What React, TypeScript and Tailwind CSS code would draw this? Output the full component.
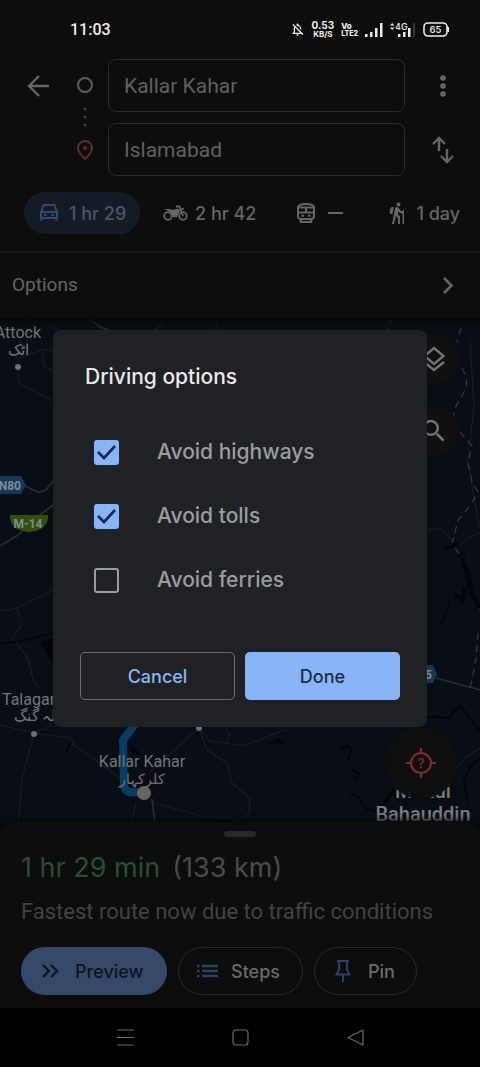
import React, { useState } from 'react';
import { MdChevronRight, MdHiking, MdOutlineNotificationsOff, MdSearch } from 'react-icons/md';

const OPTIONS = [
  { id: 'highways', label: 'Avoid highways', checked: true },
  { id: 'tolls', label: 'Avoid tolls', checked: true },
  { id: 'ferries', label: 'Avoid ferries', checked: false },
];

export default function App() {
  return (
    <div className="relative flex min-h-screen flex-col bg-[#0d0d0d] font-[Inter,sans-serif]">
      <StatusBar />
      <RouteHeader />
      <RouteMap />
      <RouteSheet />
      <SystemNav />
      <DrivingOptions />
    </div>
  );
}

const StatusBar = () => (
  <div className="flex h-[59px] items-center justify-between pl-[70px] pr-[30px] text-[#ededed]">
    <span className="font-[Roboto,sans-serif] text-[16px] font-medium">11:03</span>
    <div className="flex items-center gap-[7px]">
      <MdOutlineNotificationsOff size={15} />
      <div className="flex flex-col items-center text-[10px] font-bold leading-[9px]">
        <span>0.53</span>
        <span className="text-[8px]">KB/S</span>
      </div>
      <div className="flex flex-col text-[8px] font-extrabold leading-[8px]">
        <span>Vo</span>
        <span className="text-[7px] leading-[7px]">LTE2</span>
      </div>
      <svg width="18" height="15" viewBox="0 0 18 15" fill="currentColor">
        <path d="M0 12h2.500v3H0zM5 10h2.500v5H5zM10 6h2.500v9H10zM15 1h2.500v14H15z" />
      </svg>
      <svg width="26" height="15" viewBox="0 0 26 15" fill="currentColor">
        <path d="M0 3.500L2.200 1l2.200 2.500zM0 5.500L2.200 8l2.200-2.500zM8 12h2.500v3H8zM13 10h2.500v5H13zM18 6h2.500v9H18z" />
        <path d="M23 1h2v14h-2z" fill="#333" />
        <text x="5" y="8" fontSize="9" fontWeight="500">4G</text>
      </svg>
      <svg width="27" height="15" viewBox="0 0 27 15">
        <rect x="1" y="1" width="23" height="13" rx="4" fill="none" stroke="currentColor" strokeWidth="1.600" />
        <path d="M25 5v5" stroke="currentColor" strokeWidth="2" />
        <text x="12.500" y="11" fontSize="9.500" fontWeight="500" textAnchor="middle" fill="currentColor">65</text>
      </svg>
    </div>
  </div>
);

const RouteHeader = () => (
  <header>
    <div className="flex pl-[24px] pr-[21px] text-[#666]">
      <button aria-label="Back" className="flex h-[53px] w-[27px] items-center justify-center">
        <svg width="22" height="22" viewBox="0 0 22 22" fill="none" stroke="currentColor" strokeWidth="2.400">
          <path d="M22 11H3M12 1L2 11l10 10" />
        </svg>
      </button>
      <div className="ml-[22px] mr-[11px] flex w-6 flex-col items-center justify-between pb-4 pt-[18px]">
        <span className="size-4 rounded-full border-2 border-[#5c5c5c]" />
        <svg width="4" height="20" viewBox="0 0 4 20" fill="#4a4a4a">
          <circle cx="2" cy="2" r="1.300" />
          <circle cx="2" cy="10" r="1.300" />
          <circle cx="2" cy="18" r="1.300" />
        </svg>
        <svg width="16" height="20" viewBox="0 0 16 20" fill="none" stroke="#5e2d2b" strokeWidth="2">
          <path d="M8 1a7 7 0 0 0-7 7c0 4.500 7 11 7 11s7-6.500 7-11a7 7 0 0 0-7-7z" />
          <circle cx="8" cy="8" r="2" fill="#5e2d2b" stroke="none" />
        </svg>
      </div>
      <div className="flex min-w-0 flex-1 flex-col gap-[11px]">
        <PlaceInput label="Starting point" value="Kallar Kahar" />
        <PlaceInput label="Destination" value="Islamabad" />
      </div>
      <div className="ml-[22px] flex w-8 flex-col gap-[11px]">
        <button aria-label="More" className="flex h-[53px] items-center justify-center">
          <svg width="6" height="22" viewBox="0 0 6 22" fill="currentColor">
            <circle cx="3" cy="3" r="2.800" />
            <circle cx="3" cy="11" r="2.800" />
            <circle cx="3" cy="19" r="2.800" />
          </svg>
        </button>
        <button aria-label="Swap places" className="flex h-[53px] items-center justify-center">
          <svg width="22" height="28" viewBox="0 0 22 28" fill="none" stroke="currentColor" strokeWidth="2.400">
            <path d="M7 15V3M1 8l6-6 6 6M15 13v12M9 20l6 6 6-6" />
          </svg>
        </button>
      </div>
    </div>

    {/* Travel modes */}
    <div className="mt-4 flex h-[42px] items-center overflow-hidden whitespace-nowrap pl-6 text-[18px] font-medium text-[#666]">
      <button className="flex h-full w-[116px] items-center gap-[10px] rounded-full bg-[#151b24] pl-[15px] text-[#4c5569]">
        <Car /> 1 hr 29
      </button>
      <button className="ml-[23px] flex items-center gap-[7px]">
        <Motorcycle /> 2 hr 42
      </button>
      <button aria-label="Transit" className="ml-[41px] flex items-center gap-[13px]">
        <Subway /> <span className="h-0.5 w-[15px] bg-current" />
      </button>
      <button className="ml-[42px] flex items-center gap-[7px]">
        <MdHiking size={24} className="shrink-0" /> 1 day
      </button>
    </div>

    <button className="mt-[17px] flex h-[67px] w-full items-center justify-between border-t-2 border-[#191919] pl-3 pr-[18px] font-[Roboto,sans-serif] text-[19px] text-[#666]">
      Options
      <svg width="28" height="28" viewBox="0 0 28 28" fill="none" stroke="currentColor" strokeWidth="2.600">
        <path d="M10 6l7.500 7.500L10 21" />
      </svg>
    </button>
  </header>
);

const PlaceInput = ({ label, value }: { label: string; value: string }) => (
  <input
    aria-label={label}
    defaultValue={value}
    className="h-[53px] w-full rounded-lg border border-[#2c2c2c] bg-transparent px-[15px] font-[Roboto,sans-serif] text-[21px] text-[#606060] outline-none"
  />
);

const Car = () => (
  <svg width="20" height="18" viewBox="0 0 20 18" fill="none" stroke="#344869" strokeWidth="2" className="shrink-0">
    <path d="M2 8l2.500-7h11L18 8v6H2zM2 8h16M2.500 13v4M17.500 13v4" />
    <path d="M5 11h2.500M12.500 11H15" />
  </svg>
);

const Motorcycle = () => (
  <svg width="25" height="16" viewBox="0 0 25 16" fill="none" stroke="currentColor" strokeWidth="1.800" className="shrink-0">
    <circle cx="5" cy="11" r="3.800" />
    <circle cx="20" cy="11" r="3.800" />
    <path d="M13 1.500h3.500L20 11M17 5l4-1.500" />
    <path d="M1 4h6l3 1 5-1.500 2 2-3 6.500H10L7.500 7z" fill="currentColor" stroke="none" />
  </svg>
);

const Subway = () => (
  <svg width="18" height="20" viewBox="0 0 18 20" fill="none" stroke="currentColor" strokeWidth="2" className="shrink-0">
    <path d="M1 4.500Q1 1 9 1t8 3.500V13q0 3-3 3H4q-3 0-3-3zM1 9.500h16M9 4v5.500" />
    <path d="M2 4.500h14M3 19h12M4.500 16.500L3 19M13.500 16.500L15 19" />
    <path d="M4.500 12.800H7M11 12.800h2.500" />
  </svg>
);

const RouteMap = () => (
  <main className="relative min-h-[520px] flex-1 overflow-hidden bg-[#090e16]">
    <svg className="absolute inset-0 size-full font-[Roboto,sans-serif]" viewBox="0 0 480 520" preserveAspectRatio="xMidYMin slice">
      <defs>
        <linearGradient id="shade" x1="0" y1="0" x2="0" y2="1">
          <stop offset="0" stopColor="#060708" />
          <stop offset="1" stopColor="#060708" stopOpacity="0" />
        </linearGradient>
      </defs>

      {/* Roads */}
      <g fill="none" stroke="#171d27" strokeWidth="1.200">
        <path d="M20 0l22 4 16 8M165 0q-2 9-12 12M219 0l-3 12M18 49v15l34 19M18 49v-8l24-9h11M42 32l2 17 9 3" />
        <path d="M0 292q10 1 17-2l33-16 3-4M17 290l4 18-9 12 16 20 5 22 6 8" />
        <path d="M0 407l34 8 36 5 4 7 46 33 14 6M34 416l-12 44-5 60M53 407l-19 8" />
        <path d="M199 410l8 22 20 13 5 20 18 15-1 16-8 5-40-3-50-14M199 410l11 13 34 5 42-17M226 413l4 2-4 11M199 410l-50 45M136 484l-8 36" />
        <path d="M427 213q12-6 20 4l8 9q6 3 12-6l13-5M470 20l4 70-6 50 6 40 6 30M480 430l-15 10-18 22" />
      </g>
      <g fill="none" stroke="#242d39" strokeWidth="1.800">
        <path d="M88 0l12 9 9 3M25 168l13 6q8 0 11-6l4-5M0 228l18-11 22-20 13-10M436 360l44 12M152 481l5 39" />
      </g>
      <g fill="none" stroke="#343b45" strokeWidth="1.200" strokeDasharray="7 5">
        <path d="M392 0l-5 14M461 10l-4 14M462 50q8 14 2 24l-10 18v12M460 114l12 14-4 18 4 18 6 10-8 14-12 14-6 24M455 230l10 14 5 24 10 24M478 315l-2 26-6 30" />
      </g>

      {/* Rivers and lakes */}
      <g fill="none" stroke="#030508" strokeWidth="2">
        <path d="M0 326l26-4 27-7M427 399l22 1 11-13 20 27M440 308l5-11 5-14M340 430l8-2 3 4-3 10M352 452l8 4-5 6 M350 476l8 2 6 12 14 4 8-12M480 440q-14 10-16 24l4 20M70 424l-3 10" />
        <path d="M386 482l12-14 30-14M462 240l5 14 4 20 9 16M455 276l8 6 2-12" strokeWidth="4" />
        <path d="M445 231l14-6-8 2M457 238l8-3" strokeWidth="3" />
      </g>
      <path d="M40 325l13-5v26zM265 426l14-6 6 5zM130 425l10 10-8 4zM462 244l8 6 4 26-6-4z" fill="#030508" />

      {/* Highlighted route */}
      <path d="M135 406l-12 16 1 46q2 8 10 6l9 1" fill="none" stroke="#063d60" strokeWidth="8" />
      <circle cx="144" cy="475" r="7" fill="#656565" />
      <g fill="#6a6f75">
        <circle cx="18" cy="49" r="3" />
        <circle cx="34" cy="416" r="3" />
        <circle cx="199" cy="410" r="3" />
      </g>

      {/* Road shields */}
      <path d="M-6 158h27l5 9-5 9H-6z" fill="#15375c" />
      <path d="M10 197h38q1 9-7 14-12 6-24 0-8-5-7-14z" fill="#31500f" />
      <path d="M420 347h13l4 9-4 9h-13z" fill="#15375c" />
      <g fill="#858b92" fontSize="12" fontWeight="700">
        <text x="21" y="172" textAnchor="end">N80</text>
        <text x="28" y="210" textAnchor="middle">M-14</text>
        <text x="425" y="361">5</text>
      </g>

      {/* Places */}
      <g fill="#747474" fontSize="16">
        <text x="41" y="20" textAnchor="end">Attock</text>
        <text x="18" y="37" textAnchor="middle" fontSize="15">اٹک</text>
        <text x="2" y="387">Talagang</text>
        <text x="37" y="403" textAnchor="middle" fontSize="15">تلہ گنگ</text>
        <text x="142" y="449" textAnchor="middle">Kallar Kahar</text>
        <text x="142" y="466" textAnchor="middle" fontSize="14">کلرکہار</text>
      </g>
      <g fill="#7c7c7c" fontSize="20" fontWeight="500" textAnchor="middle">
        <text x="423" y="480">Mandi</text>
        <text x="423" y="503">Bahauddin</text>
      </g>
      <rect width="480" height="10" fill="url(#shade)" />
    </svg>

    <button aria-label="Layers" className="absolute right-[21px] top-4 flex size-[50px] items-center justify-center rounded-full bg-[#0f100f] text-[#737373]">
      <svg width="24" height="26" viewBox="0 0 24 26" fill="none" stroke="currentColor" strokeWidth="2.400">
        <path d="M12 2l9.500 8-9.500 8-9.500-8zM2 16l10 8 10-8" />
      </svg>
    </button>
    <button aria-label="Search along route" className="absolute right-[21px] top-[88px] flex size-[50px] items-center justify-center rounded-full bg-[#0f100f] text-[#737373]">
      <MdSearch size={30} />
    </button>
    <button aria-label="My location" className="absolute right-[23px] top-[409px] flex size-[72px] items-center justify-center rounded-full bg-[#0f0f0f]">
      <svg width="30" height="30" viewBox="0 0 30 30" fill="none" stroke="#7e2c29" strokeWidth="2.200">
        <circle cx="15" cy="15" r="10" />
        <path d="M15 0v6M15 24v6M0 15h6M24 15h6" />
        <text x="15" y="20" textAnchor="middle" fontSize="13" fontWeight="600" fill="#7e2c29" stroke="none">?</text>
      </svg>
    </button>
  </main>
);

const RouteSheet = () => (
  <section className="relative -mt-4 rounded-t-2xl bg-[#0d0d0d] px-[21px] pb-[13px] pt-[9px] shadow-[0_-2px_6px_#050607]">
    <div className="mx-auto h-[6px] w-8 rounded-full bg-[#292929]" />
    <h2 className="mt-[13px] whitespace-nowrap text-[27px] leading-9 text-[#4b4b4b]">
      <span className="mr-3 text-[#2d4c39]">1 hr 29 min</span>
      (133 km)
    </h2>
    <p className="mt-3 whitespace-nowrap font-[Roboto,sans-serif] text-[22px] leading-7 text-[#434343]">
      Fastest route now due to traffic conditions
    </p>
    <div className="mt-[21px] flex gap-[11px] text-[18px] font-medium text-[#6a6a6a]">
      <button className="flex h-12 w-[146px] items-center rounded-full bg-[#35496b] pl-5 text-[#0b1422]">
        <svg width="18" height="14" viewBox="0 0 18 14" fill="none" stroke="currentColor" strokeWidth="2.200" className="mr-4">
          <path d="M2 1l6 6-6 6M10 1l6 6-6 6" />
        </svg>
        Preview
      </button>
      <button className="flex h-12 w-[125px] items-center gap-[13px] rounded-full border border-[#2a2a2a] pl-[18px]">
        <svg width="21" height="14" viewBox="0 0 21 14" stroke="#2c4068" strokeWidth="2.400">
          <path d="M0 2h2.500M0 7h2.500M0 12h2.500M5 2h16M5 7h16M5 12h16" />
        </svg>
        Steps
      </button>
      <button className="flex h-12 w-[103px] items-center gap-[17px] rounded-full border border-[#2a2a2a] pl-5">
        <svg width="16" height="22" viewBox="0 0 16 22" fill="none" stroke="#2c4068" strokeWidth="2">
          <path d="M2 1h12M4 1v9l-2.500 4.500h13L12 10V1M8 15v7" />
        </svg>
        Pin
      </button>
    </div>
  </section>
);

const SystemNav = () => (
  <nav className="flex h-[59px] items-center justify-center gap-[98px] bg-black text-[#6a6a6a]">
    <button aria-label="Recent apps">
      <svg width="17" height="17" viewBox="0 0 17 17" stroke="currentColor" strokeWidth="1.200">
        <path d="M0 1h17M0 8.500h17M0 16h17" />
      </svg>
    </button>
    <button aria-label="Home">
      <svg width="17" height="17" viewBox="0 0 17 17" fill="none" stroke="currentColor" strokeWidth="1.200">
        <rect x="1" y="1" width="15" height="15" rx="3" />
      </svg>
    </button>
    <button aria-label="Back">
      <svg width="17" height="17" viewBox="0 0 17 17" fill="none" stroke="currentColor" strokeWidth="1.200" strokeLinejoin="round">
        <path d="M16 1v15L1 8.500z" />
      </svg>
    </button>
  </nav>
);

const DrivingOptions = () => {
  const [options, setOptions] = useState(OPTIONS);

  const toggle = (id: string) =>
    setOptions(options.map((o) => (o.id === id ? { ...o, checked: !o.checked } : o)));

  return (
    <div className="absolute inset-0 flex items-center px-[53px] pb-[59px] pt-[49px]">
      <div role="dialog" aria-labelledby="dialog-title" className="w-full rounded-lg bg-[#202124] px-[27px] pb-[27px] pt-[33px]">
        <h1 id="dialog-title" className="px-[5px] text-[21px] font-medium leading-7 text-[#e8eaed]">Driving options</h1>

        <div className="mb-10 mt-[29px]">
          {options.map((o) => (
            <label key={o.id} className="flex h-16 items-center gap-[38px] pl-[14px] text-[21px] font-medium text-[#9a9da1]">
              <span className="grid size-[25px]">
                <input
                  type="checkbox"
                  checked={o.checked}
                  onChange={() => toggle(o.id)}
                  className="col-start-1 row-start-1 size-[25px] appearance-none rounded-[3px] border-2 border-[#9a9da1] checked:border-[#8ab4f8] checked:bg-[#8ab4f8]"
                />
                {o.checked && (
                  <svg viewBox="0 0 25 25" fill="none" stroke="#17294a" strokeWidth="2.600" className="pointer-events-none col-start-1 row-start-1 size-[25px]">
                    <path d="M4 12l6 6L21 6" />
                  </svg>
                )}
              </span>
              {o.label}
            </label>
          ))}
        </div>

        <div className="grid grid-cols-2 gap-[10px] text-[18px] font-medium">
          <button className="h-12 rounded-[5px] border border-[#6a6d71] text-[#8ab4f8]">Cancel</button>
          <button className="h-12 rounded-[5px] bg-[#8ab4f8] text-[#1b2c4d]">Done</button>
        </div>
      </div>
    </div>
  );
};
